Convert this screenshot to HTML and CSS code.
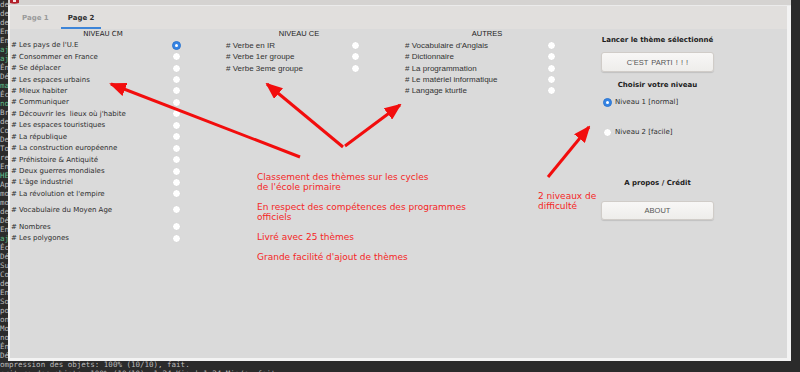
FILE: index.html
```html
<!DOCTYPE html>
<html lang="fr">
<head>
  <meta charset="UTF-8" />
  <meta name="viewport" content="width=device-width, initial-scale=1.0" />
  <title>Thèmes - Page 2</title>
  <link rel="stylesheet" href="styles.css">
</head>
<body>
<div class="desktop">

<div class="term">
<pre class="term-side">de
de
de
En
En
<span class="g">aj</span>
<span class="g">aj</span>
Én
Dé
<span class="g">ma</span>
Éc
<span class="g">no</span>
Br
de
Co
De
To
re
En
<span class="g">HE</span>
Ap
mo
mo
de
Dé
En
<span class="g">aj</span>
Éc
Dé
Su
Co
de
En
So
po
on
Mo
no
Én
Dé</pre>
<pre class="term-bottom">ompression des objets: 100% (10/10), fait.
criture des objets: 100% (10/10), 1.24 Kio | 1.24 Mio/s, fait.</pre>
</div>

  <div class="window">
    <div class="titlestrip">
      <svg class="appicon" width="9" height="4" viewBox="0 0 9 4">
        <path d="M0 0 H9 V3 Q4.5 4.5 0 3 Z" fill="#b3202a"/>
        <path d="M3 0 H6 V2 H3 Z" fill="#f3e6e6"/>
      </svg>
    </div>

    <div class="tabs">
      <span class="tab">Page 1</span>
      <span class="tab active">Page 2</span>
    </div>

    <div class="panel">
      <div class="col cm">
        <div class="head">NIVEAU CM</div>
        <div class="row"><span># Les pays de l'U.E</span><span class="radio on"></span></div>
        <div class="row"><span># Consommer en France</span><span class="radio"></span></div>
        <div class="row"><span># Se déplacer</span><span class="radio"></span></div>
        <div class="row"><span># Les espaces urbains</span><span class="radio"></span></div>
        <div class="row"><span># Mieux habiter</span><span class="radio"></span></div>
        <div class="row"><span># Communiquer</span><span class="radio"></span></div>
        <div class="row"><span># Découvrir les&nbsp; lieux où j'habite</span><span class="radio"></span></div>
        <div class="row"><span># Les espaces touristiques</span><span class="radio"></span></div>
        <div class="row"><span># La république</span><span class="radio"></span></div>
        <div class="row"><span># La construction européenne</span><span class="radio"></span></div>
        <div class="row"><span># Préhistoire &amp; Antiquité</span><span class="radio"></span></div>
        <div class="row"><span># Deux guerres mondiales</span><span class="radio"></span></div>
        <div class="row"><span># L'âge industriel</span><span class="radio"></span></div>
        <div class="row"><span># La révolution et l'empire</span><span class="radio"></span></div>
        <div class="row gap1"><span># Vocabulaire du Moyen Age</span><span class="radio"></span></div>
        <div class="row gap2"><span># Nombres</span><span class="radio"></span></div>
        <div class="row"><span># Les polygones</span><span class="radio"></span></div>
      </div>

      <div class="col ce">
        <div class="head">NIVEAU CE</div>
        <div class="row"><span># Verbe en IR</span><span class="radio"></span></div>
        <div class="row"><span># Verbe 1er groupe</span><span class="radio"></span></div>
        <div class="row"><span># Verbe 3eme groupe</span><span class="radio"></span></div>
      </div>

      <div class="col autres">
        <div class="head">AUTRES</div>
        <div class="row"><span># Vocabulaire d'Anglais</span><span class="radio"></span></div>
        <div class="row"><span># Dictionnaire</span><span class="radio"></span></div>
        <div class="row"><span># La programmation</span><span class="radio"></span></div>
        <div class="row"><span># Le matériel informatique</span><span class="radio"></span></div>
        <div class="row"><span># Langage kturtle</span><span class="radio"></span></div>
      </div>

      <div class="col side">
        <div class="box">
          <div class="title first">Lancer le thème sélectionné</div>
          <button class="btn go">C'EST PARTI ! ! !</button>
          <div class="title choose">Choisir votre niveau</div>
          <div class="level"><span class="radio on"></span>Niveau 1 [normal]</div>
          <div class="level second"><span class="radio"></span>Niveau 2 [facile]</div>
          <div class="title about-title">A propos / Crédit</div>
          <button class="btn about">ABOUT</button>
        </div>
      </div>
    </div>
  </div>

  <div class="note main-note">Classement des thèmes sur les cycles<br>de l'école primaire<br><br>En respect des compétences des programmes<br>officiels<br><br>Livré avec 25 thèmes<br><br>Grande facilité d'ajout de thèmes</div>
  <div class="note level-note">2 niveaux de<br>difficulté</div>

  <svg class="arrows" width="800" height="372" viewBox="0 0 800 372">
    <defs>
      <marker id="head" markerWidth="17" markerHeight="14" refX="15" refY="7" orient="auto" markerUnits="userSpaceOnUse">
        <path d="M0 0 L17 7 L0 14 Z" fill="#f20d0d"/>
      </marker>
    </defs>
    <line x1="300" y1="157" x2="111" y2="84" marker-end="url(#head)"/>
    <line x1="343" y1="147" x2="267" y2="84" marker-end="url(#head)"/>
    <line x1="345" y1="146" x2="400" y2="105" marker-end="url(#head)"/>
    <line x1="548" y1="177" x2="589" y2="127" marker-end="url(#head)"/>
  </svg>
</div>
</body>
</html>
```

FILE: styles.css
```css
body {
  margin: 0;
  background: #2b2b2b;
}
.desktop {
  position: relative;
  width: 800px;
  height: 372px;
  overflow: hidden;
}
.term {
  display: flex;
  flex-direction: column;
  font: 7.5px/9px "DejaVu Sans Mono", monospace;
  color: #bdbdbd;
}
.term pre {
  margin: 0;
  font: inherit;
  white-space: pre;
}
.term-side {
  width: 8px;
  height: 360px;
  margin-top: -1px;
  overflow: hidden;
}
.term .g {
  color: #5fbf8a;
}

/* window */
.window {
  position: absolute;
  left: 8px;
  top: 0;
  width: 783px;
  height: 361px;
  background: #f3f3f3;
  display: flex;
  flex-direction: column;
  font-family: "DejaVu Sans", sans-serif;
  color: #2d2d2d;
}
.titlestrip {
  height: 5px;
  background: #d5d3d1;
  border-bottom: 1px solid #ebebeb;
  padding-left: 2px;
}
.appicon {
  display: block;
}
.tabs {
  display: flex;
  height: 23px;
  margin: 0 4px 0 2px;
  padding-left: 5px;
  background: #e1dfdd;
}
.tab {
  padding: 3px 7px 0;
  margin-right: 5px;
  line-height: 18px;
  font-size: 7px;
  font-weight: bold;
  color: #9a9a9a;
  border-bottom: 2px solid transparent;
}
.tab.active {
  color: #2e2e2e;
  border-bottom-color: #3d85d8;
}
.panel {
  flex: 1;
  margin: 0 4px 3px 2px;
  background: #dadada;
  display: grid;
  grid-template-columns: 186px 206px 170px 1fr;
  align-items: start;
}

/* theme lists */
.head {
  height: 10.5px;
  line-height: 10.5px;
  text-align: center;
  color: #222;
}
.row {
  height: 11.45px;
  display: flex;
  align-items: center;
  justify-content: space-between;
  white-space: nowrap;
}
.cm {
  font-size: 7px;
}
.cm .row {
  padding: 0 15.5px 0 1px;
}
.cm .gap1 {
  margin-top: 4.5px;
}
.cm .gap2 {
  margin-top: 5.5px;
}
.ce,
.autres {
  font-family: "Liberation Sans", sans-serif;
  font-size: 8px;
  color: #333;
}
.ce .head,
.autres .head {
  font-size: 7.5px;
  color: #222;
}
.ce .row {
  padding: 0 42.5px 0 30px;
}
.autres .row {
  padding: 0 16.5px 0 3px;
}

.radio {
  flex: none;
  width: 9px;
  height: 9px;
  box-sizing: border-box;
  border-radius: 50%;
  background: #fff;
  border: 1px solid #d3d3d3;
  position: relative;
}
.radio.on {
  background: #3584e4;
  border-color: #2f77d0;
}
.radio.on::after {
  content: "";
  position: absolute;
  left: 2px;
  top: 2px;
  width: 3px;
  height: 3px;
  border-radius: 50%;
  background: #fff;
}

/* side panel */
.box {
  width: 113px;
  margin-left: 29px;
  font-size: 7px;
}
.title {
  height: 10px;
  line-height: 10px;
  font-weight: bold;
  text-align: center;
  white-space: nowrap;
  color: #1c1c1c;
}
.title.first {
  margin-top: 6px;
}
.btn {
  display: block;
  width: 113px;
  height: 20px;
  padding: 0;
  box-sizing: border-box;
  border: 1px solid #d0ccc8;
  border-radius: 3px;
  background: linear-gradient(#f8f7f6, #eeedeb);
  box-shadow: 0 1px 1px rgba(0, 0, 0, 0.12);
  font: 7.5px "Liberation Sans", sans-serif;
  color: #555;
  word-spacing: 1px;
}
.btn.go {
  margin-top: 7px;
}
.title.choose {
  margin-top: 8px;
}
.level {
  display: flex;
  align-items: center;
  gap: 3.5px;
  height: 10px;
  margin-top: 7px;
  padding-left: 1.5px;
  white-space: nowrap;
}
.level.second {
  margin-top: 20px;
}
.title.about-title {
  margin-top: 41px;
}
.btn.about {
  margin-top: 13px;
  height: 19px;
}

/* annotations drawn over the window */
.note {
  position: absolute;
  font: 9px/10px "DejaVu Sans", sans-serif;
  color: #f52626;
  white-space: nowrap;
}
.main-note {
  left: 257px;
  top: 172px;
}
.level-note {
  left: 538px;
  top: 191px;
}
.arrows {
  position: absolute;
  left: 0;
  top: 0;
  pointer-events: none;
}
.arrows line {
  stroke: #f20d0d;
  stroke-width: 3;
}
```
